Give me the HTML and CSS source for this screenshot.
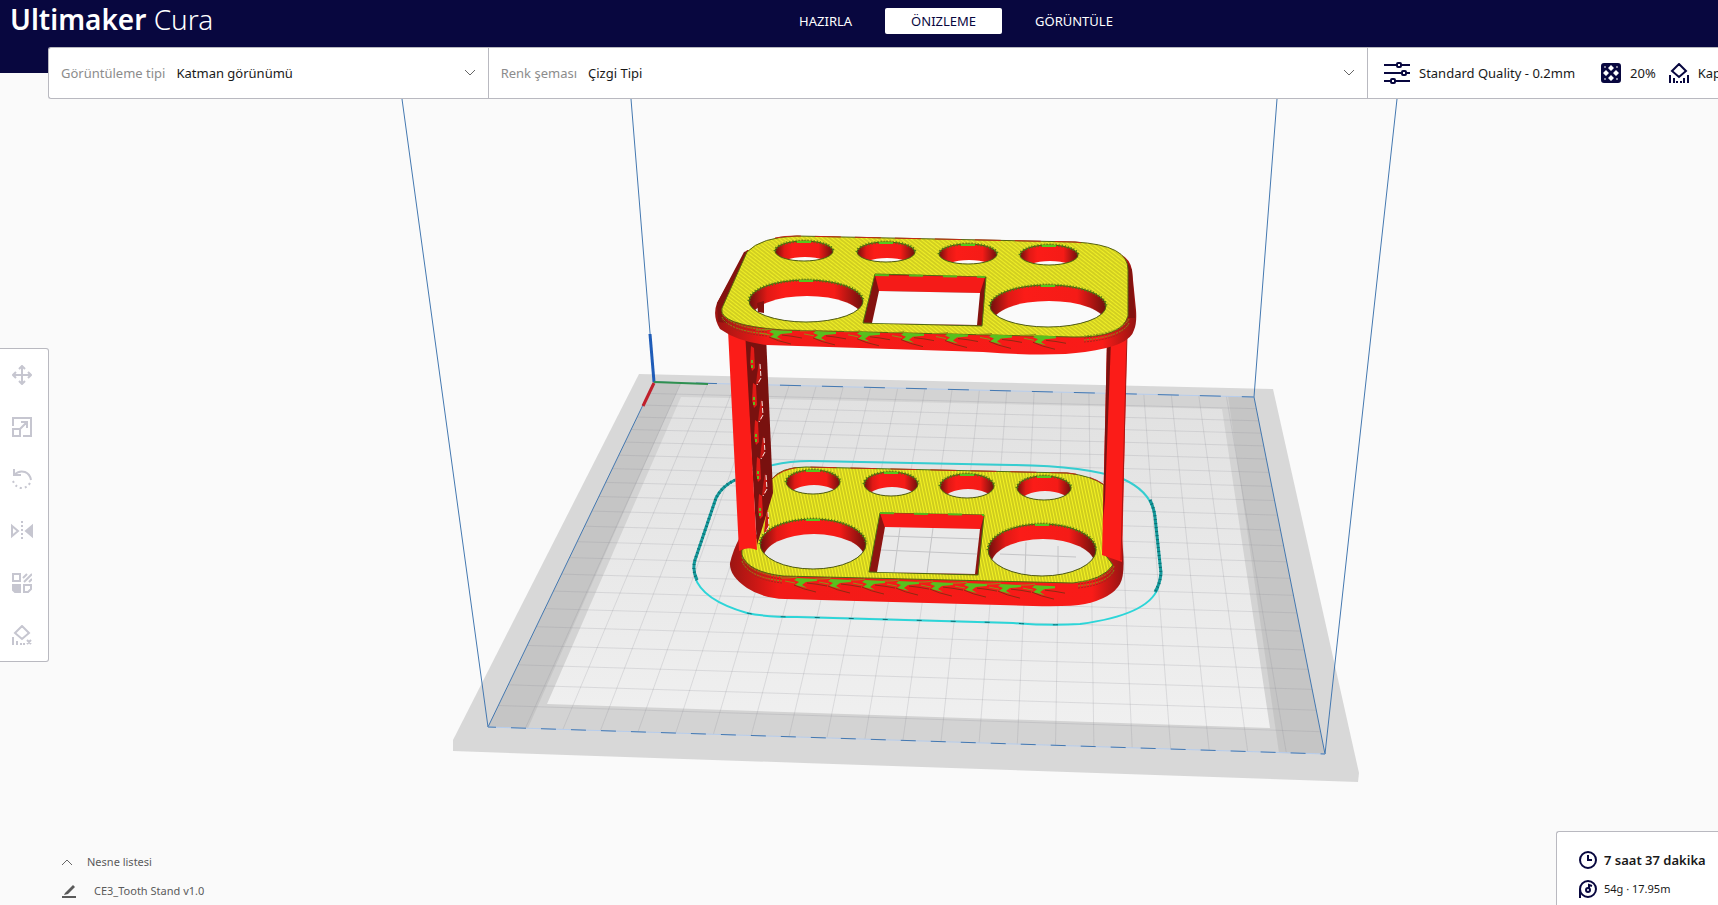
FILE: index.html
```html
<!DOCTYPE html>
<html lang="tr">
<head>
  <meta charset="UTF-8" />
  <meta name="viewport" content="width=device-width, initial-scale=1" />
  <title>Ultimaker Cura</title>
  <link rel="stylesheet" href="styles.css">
</head>
<body>
  <div class="app">
    <svg class="scene" viewBox="0 0 1718 905" preserveAspectRatio="xMidYMid slice" aria-hidden="true">
      <defs>
        <pattern id="skinTop" width="3" height="3" patternUnits="userSpaceOnUse" patternTransform="rotate(38)">
          <rect width="3" height="3" fill="#f0ef26" />
          <path d="M0 1h3" stroke="#b3b01c" stroke-width="1" />
        </pattern>
        <pattern id="skinBase" width="3" height="3" patternUnits="userSpaceOnUse" patternTransform="rotate(-12)">
          <rect width="3" height="3" fill="#f4f322" />
          <path d="M1 0v3" stroke="#a9a61a" stroke-width="1" />
        </pattern>
        <linearGradient id="wall">
          <stop offset="0" stop-color="#6d100d" />
          <stop offset="0.16" stop-color="#e01915" />
          <stop offset="0.3" stop-color="#fb1c18" />
          <stop offset="0.75" stop-color="#f51b17" />
          <stop offset="1" stop-color="#6d100d" />
        </linearGradient>
        <linearGradient id="rim">
          <stop offset="0" stop-color="#9c1512" />
          <stop offset="0.12" stop-color="#f21a17" />
          <stop offset="0.92" stop-color="#f91b18" />
          <stop offset="1" stop-color="#951412" />
        </linearGradient>
        <linearGradient id="bed" x2="0" y2="1">
          <stop offset="0" stop-color="#e1e1e1" />
          <stop offset="1" stop-color="#f0f0f0" />
        </linearGradient>
      </defs>

      <!-- build plate -->
      <path d="M639 374L1273 389L1359 773L1358 782L453 751V740Z" fill="#d8d8d8" />
      <path d="M654 382L1254 397L1325 754L488 727Z" fill="#d3d3d3" />
      <path d="M654 382L681 383L528 728L488 727Z" fill="#c5c5c5" />
      <path d="M1228 396L1254 397L1325 754L1279 753Z" fill="#c5c5c5" />
      <path d="M681 397L1222 409L1270 728L547 704Z" fill="url(#bed)" />
      <g id="grid" class="grid"></g>

      <!-- build volume -->
      <path class="edge" d="M402 99L488 727L654 382L631 99M1277 99L1254 397L1325 754L1397 99" />
      <path class="edge-pale" d="M654 382L1254 397M488 727L1325 754" />
      <path class="edge" d="M654 382L1254 397" stroke-dasharray="21 21" />
      <path class="edge" d="M488 727L1325 754" stroke-dasharray="15 15" stroke-dashoffset="7" />
      <path d="M650 334L654 382" stroke="#1f5cb8" stroke-width="3" />
      <path d="M654 382L708 384" stroke="#2f9050" stroke-width="2" />
      <path d="M654 383L643 406" stroke="#c0202c" stroke-width="3" />

      <!-- skirt -->
      <g fill="none">
        <path d="M735 480Q750 468 773 465Q790 461 810 461L1013 465Q1085 466 1123 479Q1152 492 1155 517" stroke="#35cdd0" stroke-width="2" />
        <path d="M695 577Q702 600 747 613Q765 617 797 617L1013 623Q1050 626 1080 624Q1148 615 1158 588" stroke="#2cd5d8" stroke-width="2" />
        <path d="M735 480Q722 486 716 498L695 560Q692 570 697 580M1150 500Q1154 508 1155 517L1161 573Q1160 584 1155 592" stroke="#159a9c" stroke-width="3" />
        <path d="M735 480Q722 486 716 498L695 560Q692 570 697 580M1150 500Q1154 508 1155 517L1161 573Q1160 584 1155 592" stroke="#0b6c70" stroke-width="3" stroke-dasharray="1 3" />
        <path d="M747 613Q765 617 797 617L1013 623Q1050 626 1080 624" stroke="#0d6e74" stroke-dasharray="5 29" />
      </g>

      <!-- lower shelf -->
      <path d="M740 537Q733 550 730 563Q729 576 747 588Q762 598 785 599L1033 606Q1070 607 1085 604Q1112 598 1120 584Q1125 575 1123 550L1119 500L1100 482Z" fill="url(#rim)" />
      <path d="M758 537L771 480Q780 467 806 467L1067 473Q1092 476 1104 485L1104 553L1113 565Q1103 580 1073 583L783 576Q748 572 742 555V550Z" fill="url(#skinBase)" stroke="#4c6a12" stroke-width="1" />
      <path d="M773 478Q785 467 806 467L1067 473Q1090 475 1103 484" class="top-line" />
      <g id="lowerHoles"></g>
      <path d="M880 513L984 515L978 575L869 572Z" fill="#8d1411" stroke="#4c6a12" />
      <path d="M880 513L984 515L980 530L885 528Z" fill="#f81b18" />
      <path d="M885 527L980 529L975 574L877 572Z" fill="#e9e9e9" />
      <path class="bed-line" d="M884 536L979 539M881 550L977 554M900 528L894 572M933 528L927 573M1000 554L1076 557M1026 542L1025 574M1058 546V574" />
      <path class="teeth" d="M880 513L984 515" />
      <g id="lowerRim"></g>

      <!-- legs -->
      <path d="M744 335H766L773 493L757 545Z" fill="#79110f" />
      <g id="legHoles"></g>
      <path d="M728 330H745L757 550Q748 546 739 551Z" fill="#fb1c18" />
      <path d="M1107 340L1102 555L1122 562L1127 335Z" fill="#fb1c18" />
      <path d="M1107 340H1111L1105 500L1103 520Z" fill="#7d1210" />
      <path d="M1127 335L1121 560" stroke="#a91612" />

      <!-- upper shelf -->
      <path d="M747 250L717 303Q712 316 720 329Q738 342 767 345L983 352Q1050 357 1085 352Q1130 346 1134 330Q1137 323 1136 310L1132 270Q1130 258 1118 253Z" fill="url(#rim)" />
      <path d="M717 303L744 252L749 250L723 308Q720 316 728 323L718 322Z" fill="#84120f" />
      <path d="M1127 262L1132 270L1135 318L1128 318Z" fill="#84120f" />
      <path d="M722 308L747 252Q761 237 797 236L1075 242Q1129 245 1128 270V316Q1122 338 1073 337L783 330Q717 325 722 308Z" fill="url(#skinTop)" stroke="#56620f" stroke-width="1" />
      <path d="M775 238Q784 236 797 236L1075 242L1092 244" class="top-line" />
      <g id="upperHoles"></g>
      <path d="M757 303L764 301V313L758 312Z" fill="#84120f" />
      <path d="M875 274L986 277L982 326L863 323Z" fill="#84120f" stroke="#4c6a12" />
      <path d="M875 275L985 277L980 293L879 291Z" fill="#f51b18" />
      <path d="M879 291L980 293L977 325L872 323Z" fill="#fafafa" />
      <path class="teeth" d="M875 275L985 277" />
      <g id="upperRim"></g>
    </svg>

    <header class="topbar">
      <h1 class="brand">Ultimaker <span>Cura</span></h1>
      <nav class="stages">
        <button type="button">HAZIRLA</button>
        <button type="button" class="active">ÖNIZLEME</button>
        <button type="button">GÖRÜNTÜLE</button>
      </nav>
    </header>

    <div class="toolbar">
      <div class="field">
        <label for="viewType">Görüntüleme tipi</label>
        <select id="viewType">
          <option>Katman görünümü</option>
        </select>
        <svg class="chevron" viewBox="0 0 10 6"><path d="M0 0l5 5 5-5" /></svg>
      </div>
      <div class="field">
        <label for="colorScheme">Renk şeması</label>
        <select id="colorScheme">
          <option>Çizgi Tipi</option>
        </select>
        <svg class="chevron" viewBox="0 0 10 6"><path d="M0 0l5 5 5-5" /></svg>
      </div>
      <button type="button" class="summary">
        <svg class="icon-sliders" viewBox="0 0 26 22">
          <path d="M0 3h13M18 3h8M0 11h17M22 11h4M0 19h6M12 19h14" />
          <rect x="13" y="1" width="4" height="4" rx="1" /><rect x="18" y="9" width="4" height="4" rx="1" /><rect x="7" y="17" width="4" height="4" rx="1" />
        </svg>
        <span class="profile">Standard Quality - 0.2mm</span>
        <svg class="icon" viewBox="0 0 20 20">
          <rect x="1" y="1" width="18" height="18" rx="2" fill="#08073f" />
          <path d="M10 2l3 3-3 3-3-3zM10 12l3 3-3 3-3-3zM5 7l3 3-3 3-3-3zM15 7l3 3-3 3-3-3zM4 3l1 1-1 1-1-1zM16 3l1 1-1 1-1-1zM4 15l1 1-1 1-1-1zM16 15l1 1-1 1-1-1z" fill="#fff" stroke="none" />
        </svg>
        <span class="infill">20%</span>
        <svg class="icon" viewBox="0 0 20 20">
          <path d="M10 1l7 7-7 6-7-6zM1 12v8M5 15v5M8 18v2M12 18v2M15 15v5M19 12v8" />
        </svg>
        <span>Kapalı</span>
      </button>
    </div>

    <main class="stage">
      <div class="tools">
        <button type="button" aria-label="Taşı">
          <svg viewBox="0 0 20 20"><path d="M10 1v18M1 10h18M7 4l3-3 3 3M7 16l3 3 3-3M4 7l-3 3 3 3M16 7l3 3-3 3" /></svg>
        </button>
        <button type="button" aria-label="Ölçeklendir">
          <svg viewBox="0 0 20 20"><path d="M1 9V1h18v18h-8M1 12h7v7H1zM8 12l7-7M9 5h6v6" /></svg>
        </button>
        <button type="button" aria-label="Döndür">
          <svg viewBox="0 0 20 20"><path d="M2 0v6h7M2 6q5-5 11-3 5 2 6 8" /><path d="M18 14q-3 5-8 5-6 0-9-7" stroke-dasharray="2 3" /></svg>
        </button>
        <button type="button" aria-label="Aynala">
          <svg class="mirror" viewBox="0 0 22 20"><path d="M1 5v10l6-5z" /><path d="M21 5v10l-6-5z" fill="#c6c6d0" /><path d="M11 0v20" stroke-dasharray="2 2" /></svg>
        </button>
        <button type="button" aria-label="Model ayarları">
          <svg viewBox="0 0 20 20"><path d="M1 1h7v7H1zM12 12h7v4l-3 3h-4zM11 5l4-4M12 9l8-8M17 9l3-3" /><path d="M1 12h7v7H3l-2-2z" fill="#c6c6d0" /></svg>
        </button>
        <button type="button" aria-label="Destek engelleyici">
          <svg viewBox="0 0 20 20"><path d="M10 1l7 7-7 6-7-6zM1 12v8M5 16v4M9 18v2M12 18v2M15 15l4 4M19 15l-4 4" /></svg>
        </button>
      </div>

      <div class="objects">
        <button type="button">
          <svg class="chevron" viewBox="0 0 10 6"><path d="M0 6l5-5 5 5" /></svg>
          Nesne listesi
        </button>
        <button type="button" class="job-name">
          <svg class="pencil" viewBox="0 0 14 14"><path d="M0 13h14" /><path d="M3 9l8-8 2 2-7 7-4 1z" fill="#5a5a5a" stroke="none" /></svg>
          CE3_Tooth Stand v1.0
        </button>
      </div>

      <section class="job">
        <p class="time">
          <svg viewBox="0 0 18 18"><circle cx="9" cy="9" r="8" /><path d="M9 4v5h4" /></svg>
          7 saat 37 dakika
        </p>
        <p>
          <svg viewBox="0 0 18 18"><circle cx="9" cy="9" r="8" /><path d="M1 9v9" /><circle cx="9" cy="10" r="2" /><path d="M10 9V5l3 1" /></svg>
          54g · 17.95m
        </p>
      </section>
    </main>
  </div>
  <script src="scene.js"></script>
</body>
</html>
```
FILE: styles.css
```css
* {
  box-sizing: border-box;
}
body {
  margin: 0;
  background: #fafafa;
  color: #191919;
  font-family: "Noto Sans", "Open Sans", sans-serif;
  font-size: 13px;
  line-height: 18px;
}
button, select {
  font: inherit;
  color: inherit;
  background: none;
  border: 0;
  padding: 0;
  cursor: pointer;
}
svg {
  flex: none;
}
.app {
  position: relative;
  display: flex;
  flex-direction: column;
  min-height: 100vh;
  overflow: hidden;
}

/* 3D view behind the panels */
.scene {
  position: absolute;
  inset: 0;
  width: 100%;
  height: 100%;
}
.edge {
  fill: none;
  stroke: #4478b0;
}
.edge-pale {
  fill: none;
  stroke: #b7cdec;
}
.grid path {
  stroke: #8c8c96;
  stroke-opacity: 0.22;
}
.bed-line {
  fill: none;
  stroke: #c4c4c6;
}
.teeth {
  fill: none;
  stroke: #55b81c;
  stroke-width: 2;
  stroke-dasharray: 14 20;
}
.top-line {
  fill: none;
  stroke: #c22a14;
  stroke-dasharray: 26 14;
}

.topbar {
  position: relative;
  display: flex;
  align-items: flex-start;
  height: 73px;
  background: #08073f;
  color: #fff;
}
.brand {
  width: 45%;
  margin: 0;
  padding-left: 10px;
  font-size: 28px;
  line-height: 38px;
  font-weight: 600;
}
.brand span {
  font-weight: 300;
}
.stages {
  display: flex;
  gap: 7px;
  padding-top: 8px;
}
.stages button {
  height: 26px;
  padding: 0 26px;
  border-radius: 2px;
}
.stages .active {
  background: #fff;
  color: #08073f;
}

.toolbar {
  position: relative;
  display: grid;
  grid-template-columns: 1fr 2fr 350px;
  height: 52px;
  margin: -26px 0 0 48px;
  background: #fff;
  border: 1px solid #b9b9c0;
  border-right: 0;
  border-radius: 3px 0 0 3px;
}
.field {
  display: flex;
  align-items: center;
  gap: 11px;
  padding: 0 13px 0 12px;
  border-right: 1px solid #b9b9c0;
}
.field label {
  color: #8c8c8c;
}
.field select {
  flex: 1;
  height: 100%;
  appearance: none;
}
.chevron {
  width: 10px;
  height: 6px;
  fill: none;
  stroke: #666;
}
.summary {
  display: flex;
  align-items: center;
  padding-left: 16px;
  overflow: hidden;
  white-space: nowrap;
}
.summary svg {
  margin-right: 9px;
  fill: none;
  stroke: #08073f;
  stroke-width: 2;
}
.icon-sliders {
  width: 26px;
  height: 22px;
}
.icon {
  width: 20px;
  height: 20px;
}
.profile {
  margin-right: 26px;
}
.infill {
  margin-right: 13px;
}

.stage {
  position: relative;
  flex: 1;
  display: grid;
}
.tools, .objects, .job {
  grid-area: 1 / 1;
}
.tools {
  place-self: center start;
  display: grid;
  width: 49px;
  margin-top: 6px;
  background: #fff;
  border: 1px solid #b9b9c0;
  border-left: 0;
  border-radius: 0 3px 3px 0;
}
.tools button {
  display: grid;
  place-items: center;
  height: 52px;
  padding-right: 4px;
}
.tools svg {
  width: 20px;
  height: 20px;
  fill: none;
  stroke: #c6c6d0;
  stroke-width: 2;
}
.tools .mirror {
  width: 22px;
}

.objects {
  place-self: end start;
  display: grid;
  gap: 11px;
  padding: 0 0 5px 62px;
  font-size: 11px;
  color: #5a5a5a;
}
.objects button {
  display: flex;
  align-items: center;
  gap: 15px;
  height: 18px;
}
.pencil {
  width: 14px;
  height: 14px;
  stroke: #5a5a5a;
  stroke-width: 2;
}
.objects .job-name {
  gap: 18px;
}

.job {
  place-self: end;
  display: grid;
  gap: 11px;
  width: 162px;
  padding: 19px 0 7px 22px;
  background: #fff;
  border: 1px solid #b9b9c0;
  border-width: 1px 0 0 1px;
  border-radius: 3px 0 0 0;
  font-size: 11px;
  white-space: nowrap;
}
.job p {
  display: flex;
  align-items: center;
  gap: 7px;
  margin: 0;
}
.job .time {
  font-size: 13px;
  font-weight: 600;
}
.job svg {
  width: 18px;
  height: 18px;
  fill: none;
  stroke: #08073f;
  stroke-width: 2;
}
```
FILE: scene.js
```js
const NS = "http://www.w3.org/2000/svg";

function add(parent, tag, attrs) {
  const el = document.createElementNS(NS, tag);
  Object.keys(attrs).forEach(k => el.setAttribute(k, attrs[k]));
  parent.appendChild(el);
  return el;
}

// projects a point of the unit square onto the four corners of the bed
function projector(a, b, c, d) {
  const dx1 = b[0] - c[0], dx2 = d[0] - c[0], dx3 = a[0] - b[0] + c[0] - d[0];
  const dy1 = b[1] - c[1], dy2 = d[1] - c[1], dy3 = a[1] - b[1] + c[1] - d[1];
  const det = dx1 * dy2 - dx2 * dy1;
  const g = (dx3 * dy2 - dx2 * dy3) / det;
  const h = (dx1 * dy3 - dx3 * dy1) / det;
  return (u, v) => {
    const w = g * u + h * v + 1;
    const x = (b[0] - a[0] + g * b[0]) * u + (d[0] - a[0] + h * d[0]) * v + a[0];
    const y = (b[1] - a[1] + g * b[1]) * u + (d[1] - a[1] + h * d[1]) * v + a[1];
    return (x / w).toFixed(1) + " " + (y / w).toFixed(1);
  };
}

function drawGrid() {
  const at = projector([654, 382], [1254, 397], [1325, 754], [488, 727]);
  const grid = document.getElementById("grid");
  for (let i = 1; i < 22; i++) {
    const t = i / 22;
    add(grid, "path", { d: `M${at(t, 0)}L${at(t, 1)}` });
    add(grid, "path", { d: `M${at(0, t)}L${at(1, t)}` });
  }
}

function drawHoles(id, holes, drop, floor) {
  const group = document.getElementById(id);
  holes.forEach(([cx, cy, rx, ry], i) => {
    const clip = add(group, "clipPath", { id: id + i });
    add(clip, "ellipse", { cx, cy, rx, ry });
    add(group, "ellipse", { cx, cy, rx, ry, fill: "url(#wall)" });
    add(group, "ellipse", {
      cx: cx + 1, cy: cy + drop, rx: rx - 2, ry: ry,
      fill: floor, "clip-path": `url(#${id + i})`
    });
    // ragged layer ends round the hole
    add(group, "ellipse", { cx, cy, rx, ry, fill: "none", stroke: "#4c5f10" });
    add(group, "path", {
      d: `M${cx - rx} ${cy}A${rx} ${ry} 0 0 1 ${cx + rx} ${cy}`,
      fill: "none", stroke: "#4c7a14", "stroke-width": 3, "stroke-dasharray": "1 2"
    });
    add(group, "path", {
      d: `M${cx - 7} ${cy - ry + 1}h14`, stroke: "#55c81c", "stroke-width": 2
    });
  });
}

// curved layer steps on the front edge, a green fleck at each one
function drawRim(id, x, y, step, count, slope) {
  const group = document.getElementById(id);
  for (let i = 0; i < count; i++) {
    const px = x + i * step;
    const py = y + i * step * slope;
    add(group, "path", {
      d: `M${px - 14} ${py - 4}q12 0 16 -1M${px - 10} ${py - 1}l10 2`, fill: "none", stroke: "#8f8f18"
    });
    add(group, "path", {
      d: `M${px + 22} ${py - 3}l-20 -1l-3 2l5 2l-4 3l12 3l-5 -3l4 -3l11 -1z`, fill: "#58c01e"
    });
    add(group, "path", {
      d: `M${px - 1} ${py + 3}q8 4 22 7M${px + 12} ${py + 1}q10 1 20 3`, fill: "none", stroke: "#8f2a12"
    });
  }
}

function drawCorners(id, arcs) {
  const group = document.getElementById(id);
  arcs.forEach(([x, y, w, h]) => {
    for (let i = 0; i < 4; i++) {
      add(group, "path", {
        d: `M${x} ${y + i * 2}q${w * 0.15} ${h * 0.8} ${w} ${h}`,
        fill: "none", stroke: i % 2 ? "#a3281a" : "#7c9a18", "stroke-dasharray": "2 1"
      });
    }
  });
}

function drawLegHoles() {
  const group = document.getElementById("legHoles");
  for (let i = 0; i < 5; i++) {
    const x = 751 + i * 2, y = 346 + i * 37;
    add(group, "path", { d: `M${x} ${y}l3 2l1 20l-3 3l-2 -8z`, fill: "#e01a16" });
    add(group, "path", { d: `M${x + 1} ${y + 14}v9`, stroke: "#62b81c", "stroke-width": 2, "stroke-dasharray": "3 2" });
    add(group, "path", { d: `M${x + 8} ${y + 16}l2 6l-1 14l-4 3l1 -10z`, fill: "#c41814" });
    add(group, "path", { d: `M${x + 9} ${y + 18}l1 14l-4 7`, fill: "none", stroke: "#f4e6e0", "stroke-dasharray": "5 2" });
  }
}

drawGrid();
drawHoles("lowerHoles", [
  [813, 482, 27, 12], [891, 484, 27, 12], [967, 486, 27, 12], [1044, 488, 27, 12],
  [813, 544, 53, 25], [1042, 550, 54, 26]
], 15, "#e9e9e9");
drawHoles("upperHoles", [
  [804, 251, 29, 10], [886, 252, 29, 10], [968, 254, 29, 10], [1049, 255, 29, 10],
  [806, 301, 57, 21], [1048, 306, 58, 21]
], 16, "#fafafa");
drawCorners("lowerRim", [[742, 557, 40, 20], [1114, 566, -36, 16]]);
drawCorners("upperRim", [[722, 313, 45, 17], [1129, 319, -45, 17]]);
drawRim("lowerRim", 795, 582, 34, 8, 0.03);
drawRim("upperRim", 770, 334, 44, 7, 0.02);
drawLegHoles();
```
